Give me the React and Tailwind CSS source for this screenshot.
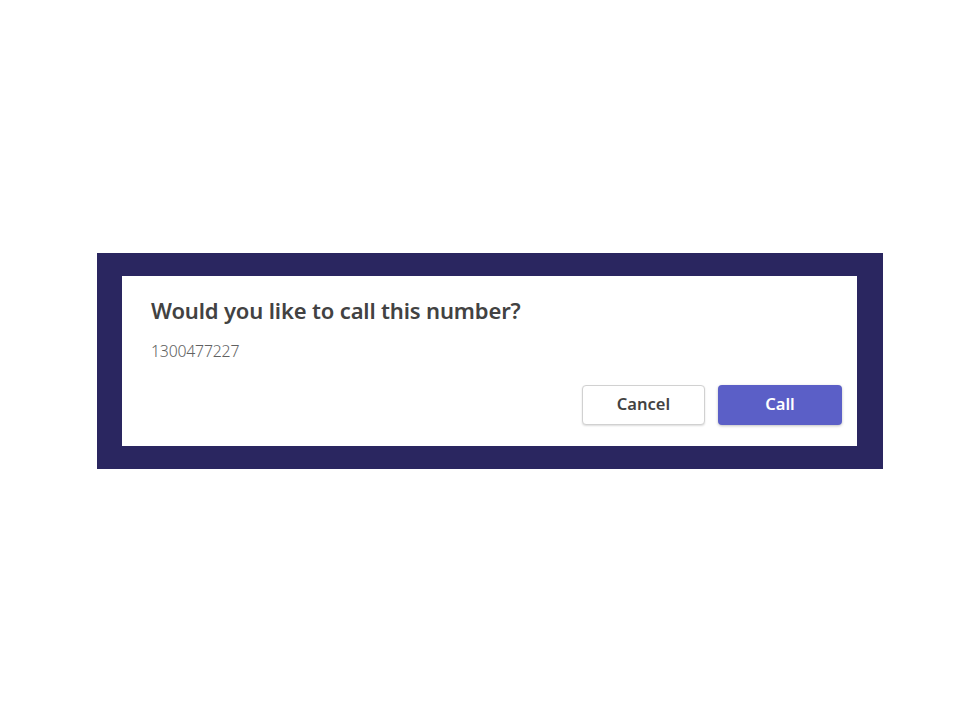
import React from "react";

export default function App() {
  return (
    <div
      className="w-full h-[721px] bg-white flex items-center justify-center"
      style={{ fontFamily: '"Noto Sans", "Open Sans", sans-serif' }}
    >
      <div className="w-[786px] h-[216px] bg-[#2a2660] pt-[23px] pb-[23px] pl-[25px] pr-[26px]">
        <div className="h-full bg-white flex flex-col pl-[29px] pr-[15px] pt-[19px] pb-[21px]">
          <h2 className="text-[22px] font-semibold text-[#424242] leading-[30px] tracking-[-0.15px]">
            Would you like to call this number?
          </h2>
          <p className="mt-[16px] text-[15.8px] font-light text-[#616161] leading-[20px] tracking-[-0.2px]">
            1300477227
          </p>
          <div className="mt-auto flex justify-end gap-[13px]">
            <button className="w-[123px] h-[40px] rounded-[4px] border border-[#d1d1d1] bg-white text-[16.5px] font-semibold text-[#424242] shadow-[0_1px_2px_rgba(0,0,0,0.14)]">
              Cancel
            </button>
            <button className="w-[124px] h-[40px] rounded-[4px] bg-[#5b5fc7] text-[16.5px] font-semibold text-white shadow-[0_1px_3px_rgba(0,0,0,0.25)]">
              Call
            </button>
          </div>
        </div>
      </div>
    </div>
  );
}
